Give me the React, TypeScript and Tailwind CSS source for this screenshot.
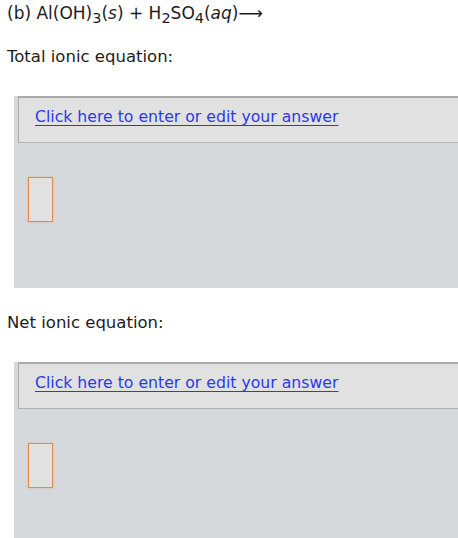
const sections = [
  { label: 'Total ionic equation:', labelGap: 'mt-[24px]', panelH: 'h-[192px]' },
  { label: 'Net ionic equation:', labelGap: 'mt-[25px]', panelH: 'h-[177px]' },
];

function AnswerPanel({ height }: { height: string }) {
  return (
    <div className={`mt-[29px] ml-[14px] bg-[#d6d9dc] ${height}`}>
      {/* Entry bar */}
      <div className="ml-[4px] bg-[#e1e1e1] border-t-2 border-l border-b border-[#ababab] border-b-[#b4b4b4] pl-[16px] pt-[10px] pb-[16px] text-[15.7px] leading-[18px]">
        <span className="text-[#2b3ae6] underline underline-offset-[3px] cursor-pointer">
          Click here to enter or edit your answer
        </span>
      </div>

      {/* Empty answer box */}
      <div className="ml-[14px] mt-[34px] w-[25px] h-[45px] bg-[#e1e1e1] border border-[#e8894c] shadow-[0_0_2px_rgba(240,150,90,0.6)]" />
    </div>
  );
}

export default function App() {
  return (
    <div className="w-[458px] h-[538px] overflow-hidden bg-white text-[#1c1c1c] font-['DejaVu_Sans',Verdana,sans-serif]">
      <div className="pl-[7px] pt-[3px] text-[17px] leading-[20px] whitespace-nowrap">
        (b) Al(OH)<sub className="text-[0.85em]">3</sub>(<i>s</i>) + H<sub className="text-[0.85em]">2</sub>SO<sub className="text-[0.85em]">4</sub>(<i>aq</i>)⟶
      </div>

      {sections.map((s) => (
        <div key={s.label}>
          <div className={`pl-[7px] text-[16.5px] leading-[20px] ${s.labelGap}`}>{s.label}</div>
          <AnswerPanel height={s.panelH} />
        </div>
      ))}
    </div>
  );
}
